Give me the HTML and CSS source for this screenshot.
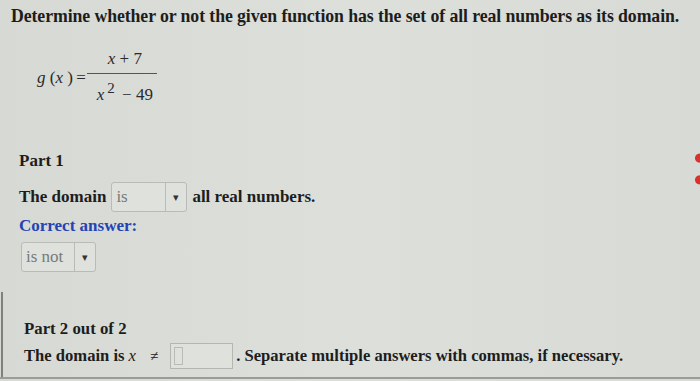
FILE: index.html
```html
<!DOCTYPE html>
<html>
<head>
<meta charset="utf-8">
<link rel="stylesheet" href="styles.css">
</head>
<body>
<div class="page">
  <h1 class="title">Determine whether or not the given function has the set of all real numbers as its domain.</h1>
  <div class="formula">
    <span class="lhs"><i>g</i> (<i>x</i> )&thinsp;=</span>
    <span class="frac">
      <span class="num"><i>x</i> + 7</span>
      <span class="den"><i>x</i><sup>2</sup> − 49</span>
    </span>
  </div>
  <div class="part1">
    <div class="part-label">Part 1</div>
    <div class="line">The domain
      <span class="select wide"><span class="val">is</span><span class="arrow">▾</span></span>
      all real numbers.</div>
    <div class="correct">Correct answer:</div>
    <div class="answer"><span class="select"><span class="val">is not</span><span class="arrow">▾</span></span></div>
  </div>
  <div class="part2">
    <div class="part-label">Part 2 out of 2</div>
    <div class="line">The domain is <i class="var">x</i> <span class="ne">≠</span>
      <span class="input"><span class="caret"></span></span>. Separate multiple answers with commas, if necessary.</div>
  </div>
  <div class="marker"></div>
</div>
</body>
</html>
```
FILE: styles.css
```css
html, body {
  margin: 0;
  padding: 0;
}
body {
  width: 700px;
  height: 381px;
  overflow: hidden;
  background: linear-gradient(90deg, #d6d9d4 0%, #dddfdb 50%, #d8dad5 100%);
  font-family: "Liberation Serif", "Times New Roman", serif;
  color: #1d1d1d;
}
.page {
  position: relative;
  height: 379px;
  border-bottom: 2px solid #9a9c98;
  box-sizing: border-box;
  display: flex;
  flex-direction: column;
}
.title {
  margin: 0;
  padding: 6px 0 0 11px;
  font-size: 17.8px;
  font-weight: bold;
  letter-spacing: -0.1px;
  white-space: nowrap;
}
.formula {
  display: flex;
  align-items: center;
  margin: 22px 0 0 37px;
  font-family: "Liberation Serif", serif;
  font-size: 17px;
  color: #2a2a2a;
}
.formula i, .var {
  font-family: "Liberation Serif", serif;
  font-style: italic;
}
.lhs {
  margin-top: 2px;
}
.frac {
  display: inline-flex;
  flex-direction: column;
  align-items: center;
  margin-left: 1px;
}
.num {
  padding: 0 0 4px 6px;
  border-bottom: 1px solid #555;
  width: 64px;
  text-align: center;
}
.den {
  padding-top: 6px;
  padding-left: 6px;
}
.den sup {
  font-size: 15px;
  vertical-align: 7px;
  margin-left: 3px;
  margin-right: 3px;
}
.part1 {
  padding: 46px 0 0 19px;
}
.part-label {
  font-weight: bold;
  font-size: 17px;
}
.line {
  font-weight: bold;
  font-size: 17px;
  display: flex;
  align-items: center;
  gap: 5px;
  white-space: nowrap;
}
.part1 .line {
  margin-top: 11px;
}
.select {
  display: inline-flex;
  align-items: stretch;
  height: 30px;
  border: 1px solid #b8bbb6;
  border-radius: 3px;
  box-sizing: border-box;
  background: #dfe1dd;
  font-weight: normal;
  font-family: "Liberation Serif", serif;
  color: #777a77;
  font-size: 17px;
}
.select .val {
  display: flex;
  align-items: center;
  padding: 0 6px 0 4px;
  border-right: 1px solid #b8bbb6;
}
.select.wide .val {
  width: 43px;
}
.select .arrow {
  display: flex;
  align-items: center;
  justify-content: center;
  width: 20px;
  font-size: 11px;
  color: #333;
}
.correct {
  margin-top: 4px;
  color: #2344b4;
  font-weight: bold;
  font-size: 17px;
}
.answer {
  margin-top: 6px;
  padding-left: 2px;
}
.answer .select .val {
  width: 42px;
}
.part2 {
  flex: 1;
  margin-top: 20px;
  margin-left: 1px;
  border-left: 2px solid #7d827f;
  padding: 27px 0 0 21px;
}
.part2 .part-label {
  font-size: 16.8px;
}
.part2 .line {
  margin-top: 4px;
  font-size: 16.6px;
  gap: 0;
}
.var {
  font-weight: normal;
  margin: 0 14px 0 4px;
}
.ne {
  font-weight: normal;
  font-size: 15px;
  margin-right: 9px;
}
.input {
  display: inline-flex;
  align-items: center;
  width: 63px;
  height: 26px;
  border: 1px solid #b3b6b1;
  box-sizing: border-box;
  background: #dfe1dd;
  margin: 0 3px 0 3px;
  padding-left: 3px;
}
.caret {
  width: 7px;
  height: 16px;
  border: 1px solid #b8bbb6;
}
.marker {
  position: absolute;
  right: -4px;
  top: 152px;
  width: 9px;
  height: 34px;
  background: radial-gradient(circle at 50% 18%, #d8322c 0 4px, transparent 5px),
              radial-gradient(circle at 50% 82%, #d8322c 0 4px, transparent 5px);
}
```
